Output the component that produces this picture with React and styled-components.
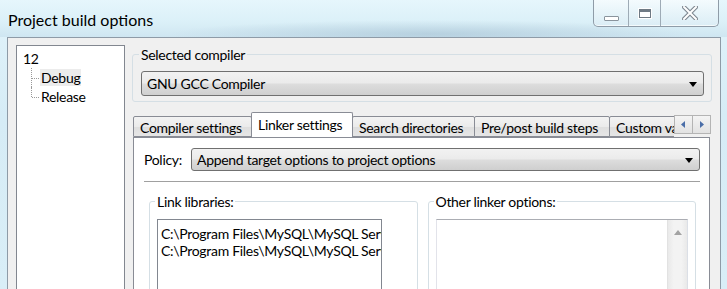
import React from 'react';
import styled, { createGlobalStyle } from 'styled-components';

const FONT = `"Lato", "Liberation Sans", sans-serif`;

const GlobalStyle = createGlobalStyle`
  html, body {
    margin: 0;
    padding: 0;
    overflow: hidden;
    background: #dcedf5;
  }
  body {
    font-family: ${FONT};
    font-size: 14px;
    letter-spacing: -0.3px;
    color: #000;
  }
`;

const App = () => {
  return (
    <>
      <GlobalStyle />
      <Window>
        <TitleBar>
          <Title>Project build options</Title>
          <CaptionGroup>
            <CapButton w={34}>
              <MinGlyph />
            </CapButton>
            <CapButton w={31}>
              <MaxGlyph />
            </CapButton>
            <CapButton w={57}>
              <svg width="16" height="14" viewBox="0 0 16 14">
                <path d="M2 1 L14 13 M14 1 L2 13" stroke="#7d8790" strokeWidth="4.2" strokeLinecap="square" />
                <path d="M2 1 L14 13 M14 1 L2 13" stroke="#fff" strokeWidth="2" strokeLinecap="square" />
              </svg>
            </CapButton>
          </CaptionGroup>
        </TitleBar>

        <Client>
          <Tree>
            <TreeRow>12</TreeRow>
            <TreeChildren>
              <TreeItem>
                <TreeLabel selected>Debug</TreeLabel>
              </TreeItem>
              <TreeItem last>
                <TreeLabel>Release</TreeLabel>
              </TreeItem>
            </TreeChildren>
          </Tree>

          <RightPane>
            <Group pad="8px 7px 5px 8px">
              <Legend>Selected compiler</Legend>
              <Combo h={25}>
                <span>GNU GCC Compiler</span>
                <DropArrow />
              </Combo>
            </Group>

            <TabStrip>
              <TabList>
                <Tab w={119}>Compiler settings</Tab>
                <Tab w={102} active>Linker settings</Tab>
                <Tab w={123}>Search directories</Tab>
                <Tab w={136}>Pre/post build steps</Tab>
                <Tab w={90}>Custom variables</Tab>
              </TabList>
              <ScrollBtn>
                <svg width="5" height="7" viewBox="0 0 5 7">
                  <path d="M4 0 L0 3.5 L4 7 Z" fill="#4a6ea8" />
                </svg>
              </ScrollBtn>
              <ScrollBtn>
                <svg width="5" height="7" viewBox="0 0 5 7">
                  <path d="M1 0 L5 3.5 L1 7 Z" fill="#4a6ea8" />
                </svg>
              </ScrollBtn>
            </TabStrip>

            <TabPage>
              <PolicyRow>
                <PolicyLabel>Policy:</PolicyLabel>
                <Combo h={23}>
                  <span>Append target options to project options</span>
                  <DropArrow />
                </Combo>
              </PolicyRow>
              <Separator />
              <GroupsRow>
                <Group pad="9px 7px 0 7px">
                  <Legend>Link libraries:</Legend>
                  <ListBox>
                    <ListLine>C:\Program Files\MySQL\MySQL Server 5.5\lib\libmysql.lib</ListLine>
                    <ListLine>C:\Program Files\MySQL\MySQL Server 5.5\lib\mysqlclient.lib</ListLine>
                  </ListBox>
                </Group>
                <Group pad="9px 7px 0 7px">
                  <Legend>Other linker options:</Legend>
                  <TextBox>
                    <TextArea />
                    <VScroll>
                      <svg width="8" height="5" viewBox="0 0 8 5">
                        <path d="M0 5 L4 0 L8 5 Z" fill="#a3a3a3" />
                      </svg>
                    </VScroll>
                  </TextBox>
                </Group>
              </GroupsRow>
            </TabPage>
          </RightPane>
        </Client>
      </Window>
    </>
  );
};

export default App;

const Window = styled.div`
  width: 727px;
  height: 289px;
  display: flex;
  flex-direction: column;
  overflow: hidden;
  background: linear-gradient(180deg, #e2f4fb 0%, #d6ecf6 40%, #d9eef7 100%);
`;

const TitleBar = styled.div`
  height: 37px;
  flex: none;
  display: flex;
  justify-content: space-between;
  align-items: flex-start;
  background:
    radial-gradient(ellipse 260px 14px at 430px 34px, rgba(150, 180, 200, 0.45), rgba(150, 180, 200, 0) 100%),
    linear-gradient(180deg, #e6f6fc 0%, #dbf0f8 60%, #cfe6f1 100%);
`;

const Title = styled.div`
  margin: 11px 0 0 8px;
  font-size: 16px;
  letter-spacing: 0;
  line-height: 18px;
  color: #000;
`;

const CaptionGroup = styled.div`
  display: flex;
  height: 26px;
  margin-right: 8px;
  border: 1px solid #8f9ca8;
  border-top: none;
  border-radius: 0 0 5px 5px;
  overflow: hidden;
  background: linear-gradient(180deg, rgba(255, 255, 255, 0.55), rgba(220, 236, 244, 0.6));
  box-shadow: inset 0 -1px 0 rgba(255, 255, 255, 0.7);
`;

const CapButton = styled.div`
  width: ${p => p.w}px;
  display: flex;
  align-items: center;
  justify-content: center;
  & + & {
    border-left: 1px solid #9eabb6;
  }
`;

const MinGlyph = styled.div`
  width: 13px;
  height: 3px;
  margin-top: 11px;
  border: 1px solid #8a949d;
  border-radius: 1px;
  background: #fff;
`;

const MaxGlyph = styled.div`
  width: 10px;
  height: 5px;
  border: 1px solid #6f7a84;
  border-top-width: 3px;
  background: #fff;
  box-shadow: 0 0 0 1px #fff;
`;

const Client = styled.div`
  flex: 1;
  min-height: 0;
  display: flex;
  margin: 0 6px 0 7px;
  padding: 7px 0 0 8px;
  border: 1px solid #8e9ba7;
  border-bottom: none;
  background: #f0f0f0;
`;

const Tree = styled.div`
  width: 109px;
  flex: none;
  box-sizing: border-box;
  background: #fff;
  border: 1px solid #828790;
  border-bottom: none;
  padding: 3px 0 0 6px;
`;

const TreeRow = styled.div`
  height: 19px;
  line-height: 19px;
`;

const TreeChildren = styled.div`
  margin-left: 8px;
`;

const TreeItem = styled.div`
  position: relative;
  height: 19px;
  line-height: 19px;
  padding-left: 9px;
  &::before {
    content: '';
    position: absolute;
    left: 0;
    top: 0;
    height: ${p => (p.last ? '50%' : '100%')};
    border-left: 1px dotted #9a9a9a;
  }
  &::after {
    content: '';
    position: absolute;
    left: 1px;
    top: 50%;
    width: 7px;
    border-top: 1px dotted #9a9a9a;
  }
`;

const TreeLabel = styled.span`
  display: inline-block;
  line-height: 17px;
  padding: 0 1px;
  background: ${p => (p.selected ? '#ececec' : 'transparent')};
`;

const RightPane = styled.div`
  flex: 1;
  min-width: 0;
  display: flex;
  flex-direction: column;
  margin: 0 8px 0 7px;
  padding-top: 1px;
`;

const Group = styled.fieldset`
  margin: 0;
  min-width: 0;
  border: 1px solid #d5dfe5;
  border-radius: 3px;
  padding: ${p => p.pad};
`;

const Legend = styled.legend`
  padding: 0 2px;
  margin-left: -2px;
  line-height: 17px;
`;

const Combo = styled.div`
  flex: 1;
  height: ${p => p.h}px;
  box-sizing: border-box;
  display: flex;
  align-items: center;
  justify-content: space-between;
  padding: 0 6px 0 5px;
  border: 1px solid #707070;
  border-radius: 3px;
  background: linear-gradient(180deg, #f2f2f2 0%, #ebebeb 48%, #dddddd 52%, #cfcfcf 100%);
  white-space: nowrap;
`;

const DropArrow = styled.span`
  width: 0;
  height: 0;
  border-left: 4px solid transparent;
  border-right: 4px solid transparent;
  border-top: 5px solid #000;
  margin-top: 1px;
`;

const TabStrip = styled.div`
  display: flex;
  align-items: flex-end;
  height: 25px;
  margin: 10px 1px 0 1px;
`;

const TabList = styled.div`
  flex: 1;
  min-width: 0;
  height: 25px;
  display: flex;
  align-items: flex-end;
  overflow: hidden;
`;

const Tab = styled.div`
  flex: none;
  width: ${p => p.w}px;
  height: ${p => (p.active ? 26 : 21)}px;
  box-sizing: border-box;
  margin-left: -1px;
  margin-bottom: ${p => (p.active ? -1 : 0)}px;
  position: relative;
  z-index: ${p => (p.active ? 1 : 0)};
  border: 1px solid #898c95;
  border-bottom: ${p => (p.active ? 'none' : '1px solid #898c95')};
  border-radius: 2px 2px 0 0;
  background: ${p =>
    p.active ? '#fff' : 'linear-gradient(180deg, #f3f3f3 0%, #ebebeb 50%, #dedede 51%, #e6e6e6 100%)'};
  padding: ${p => (p.active ? '2px 0 0 6px' : '1px 0 0 6px')};
  line-height: 20px;
  white-space: nowrap;
  overflow: hidden;
  &:first-child {
    margin-left: 0;
  }
`;

const ScrollBtn = styled.div`
  align-self: flex-start;
  flex: none;
  width: 19px;
  height: 19px;
  margin-top: 3px;
  box-sizing: border-box;
  display: flex;
  align-items: center;
  justify-content: center;
  border: 1px solid #b4b4b4;
  background: linear-gradient(180deg, #f4f4f4, #e2e2e2);
  & + & {
    margin-left: -1px;
  }
`;

const TabPage = styled.div`
  flex: 1;
  margin: 0 2px 0 1px;
  border: 1px solid #898c95;
  border-bottom: none;
  background: #fff;
  padding: 10px 9px 0 10px;
`;

const PolicyRow = styled.div`
  display: flex;
  align-items: center;
`;

const PolicyLabel = styled.span`
  width: 47px;
  flex: none;
`;

const Separator = styled.div`
  margin-top: 10px;
  border-top: 1px solid #a0a0a0;
`;

const GroupsRow = styled.div`
  display: grid;
  grid-template-columns: 1fr 1fr;
  gap: 10px;
  margin-top: 11px;
  padding: 0 4px 0 5px;
`;

const ListBox = styled.div`
  width: 225px;
  height: 90px;
  box-sizing: border-box;
  border: 1px solid #828790;
  padding: 5px 3px;
  overflow: hidden;
`;

const ListLine = styled.div`
  line-height: 17px;
  white-space: nowrap;
`;

const TextBox = styled.div`
  display: flex;
  height: 90px;
  border: 1px solid #abadb3;
  border-color: #abadb3 #dbdfe6 #e3e9ef #e2e3ea;
`;

const TextArea = styled.div`
  flex: 1;
  background: #fff;
`;

const VScroll = styled.div`
  width: 19px;
  display: flex;
  justify-content: center;
  padding-top: 10px;
  background: linear-gradient(90deg, #e9e9e9, #f3f3f3 30%, #f3f3f3 70%, #e9e9e9);
  border-left: 1px solid #e2e2e2;
`;
